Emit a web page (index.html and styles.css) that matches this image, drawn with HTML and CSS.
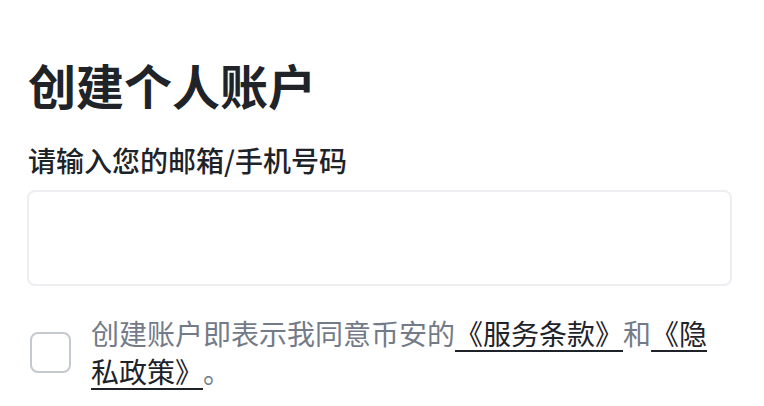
FILE: index.html
```html
<!DOCTYPE html>
<html lang="zh-CN">
<head>
<meta charset="utf-8">
<title>创建个人账户</title>
<link rel="stylesheet" href="styles.css">
</head>
<body>
<main class="page">
  <h1 class="title">创建个人账户</h1>
  <label class="field-label" for="account">请输入您的邮箱/手机号码</label>
  <input class="field-input" id="account" type="text">
  <div class="agree">
    <span class="checkbox"></span>
    <p class="agree-text">创建账户即表示我同意币安的<a class="link" href="#">《服务条款》</a>和<a class="link" href="#">《隐私政策》</a>。</p>
  </div>
</main>
</body>
</html>
```
FILE: styles.css
```css
html, body {
  margin: 0;
  padding: 0;
  background: #ffffff;
}
body {
  font-family: "Noto Sans CJK SC", "Noto Sans", sans-serif;
  color: #1e2329;
}
.page {
  width: 705px;
  padding: 52px 0 0 27px;
  display: flex;
  flex-direction: column;
}
.title {
  margin: 0;
  font-size: 48px;
  line-height: 64px;
  font-weight: 700;
  color: #202328;
  padding-left: 1px;
}
.field-label {
  margin-top: 24px;
  font-size: 28px;
  line-height: 40px;
  font-weight: 500;
  color: #1e2329;
  padding-left: 1px;
}
.field-input {
  margin-top: 10px;
  box-sizing: border-box;
  width: 705px;
  height: 96px;
  border: 2px solid #eceef1;
  border-radius: 8px;
  background: #fff;
  outline: none;
}
.agree {
  margin-top: 28px;
  display: flex;
  align-items: center;
  gap: 20px;
}
.checkbox {
  flex: none;
  box-sizing: border-box;
  width: 41px;
  height: 41px;
  border: 2px solid #c4c8cf;
  border-radius: 8px;
  margin-left: 3px;
}
.agree-text {
  margin: 0;
  font-size: 28px;
  line-height: 38px;
  color: #737b88;
  text-spacing-trim: space-all;
}
.link {
  color: #1e2329;
  text-decoration: underline;
  text-underline-offset: 5px;
  text-decoration-thickness: 2px;
}
```
